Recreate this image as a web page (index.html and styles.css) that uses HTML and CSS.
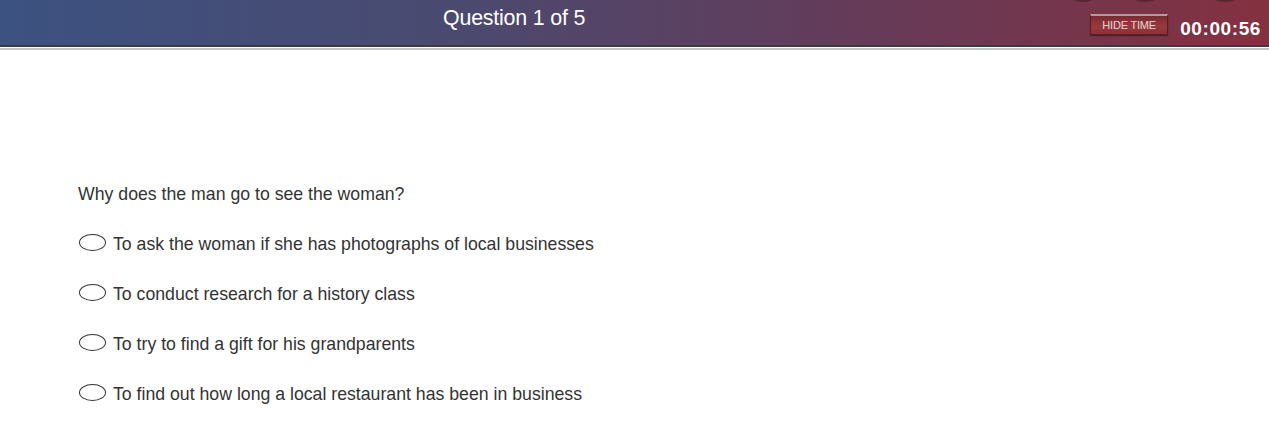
FILE: index.html
```html
<!DOCTYPE html>
<html>
<head>
<meta charset="utf-8">
<link rel="stylesheet" href="styles.css">
</head>
<body>
<header class="topbar">
  <div class="title">Question 1 of 5</div>
  <div class="tools">
    <button class="hide-btn">HIDE TIME</button>
    <span class="timer">00:00:56</span>
  </div>
  <span class="knob k1"></span>
  <span class="knob k2"></span>
  <span class="knob k3"></span>
</header>
<div class="rule"></div>
<main class="content">
  <p class="question">Why does the man go to see the woman?</p>
  <ul class="options">
    <li class="option"><span class="radio"></span><span>To ask the woman if she has photographs of local businesses</span></li>
    <li class="option"><span class="radio"></span><span>To conduct research for a history class</span></li>
    <li class="option"><span class="radio"></span><span>To try to find a gift for his grandparents</span></li>
    <li class="option"><span class="radio"></span><span>To find out how long a local restaurant has been in business</span></li>
  </ul>
</main>
</body>
</html>
```

FILE: styles.css
```css
* { box-sizing: border-box; }
html, body { margin: 0; padding: 0; background: #fff; }
body { font-family: "Liberation Sans", Arial, sans-serif; color: #333; }

.topbar {
  position: relative;
  height: 47px;
  background: linear-gradient(to right, #3c5281 0%, #4a4a70 35%, #673a57 70%, #843140 100%);
  border-bottom: 2px solid #3a3a44;
  display: flex;
  align-items: flex-start;
  overflow: hidden;
}
.title {
  color: #fff;
  font-size: 21.4px;
  margin-left: 443px;
  margin-top: 6px;
  letter-spacing: -0.2px;
}
.tools {
  margin-left: auto;
  margin-right: 8px;
  margin-top: 14px;
  display: flex;
  align-items: flex-start;
  gap: 12px;
}
.hide-btn {
  width: 78px;
  height: 21px;
  padding: 0;
  border: 1px solid #5a1f24;
  border-top: 2px solid #a8a0a0;
  background: linear-gradient(#7a2a30, #9a3a40 60%, #8a3036);
  color: #e4d6d6;
  font-family: "Liberation Sans", Arial, sans-serif;
  font-size: 11px;
  letter-spacing: -0.2px;
  box-shadow: 0 1px 1px rgba(0,0,0,0.35);
}
.timer {
  color: #fff;
  font-size: 19px;
  line-height: 22px;
  font-weight: bold;
  letter-spacing: 0.6px;
  margin-top: 4px;
}
.knob {
  position: absolute;
  top: -14px;
  width: 30px;
  height: 16px;
  border-radius: 50%;
  background: #5a2430;
}
.k1 { left: 1068px; }
.k2 { left: 1130px; }
.k3 { left: 1210px; }

.rule {
  height: 3px;
  border-top: 1px solid #fff;
  background: #c4c4c4;
}

.content { padding: 134px 0 0 78px; }
.question {
  margin: 0 0 30px 0;
  font-size: 17.7px;
  line-height: 20px;
}
.options { list-style: none; margin: 0; padding: 0; display: flex; flex-direction: column; gap: 30px; }
.option {
  display: flex;
  align-items: center;
  font-size: 17.7px;
  line-height: 20px;
}
.radio {
  width: 27px;
  height: 17px;
  border: 1.3px solid #333;
  border-radius: 50%;
  margin-left: 1px;
  margin-right: 7px;
  margin-top: -3px;
  flex: none;
}
```
